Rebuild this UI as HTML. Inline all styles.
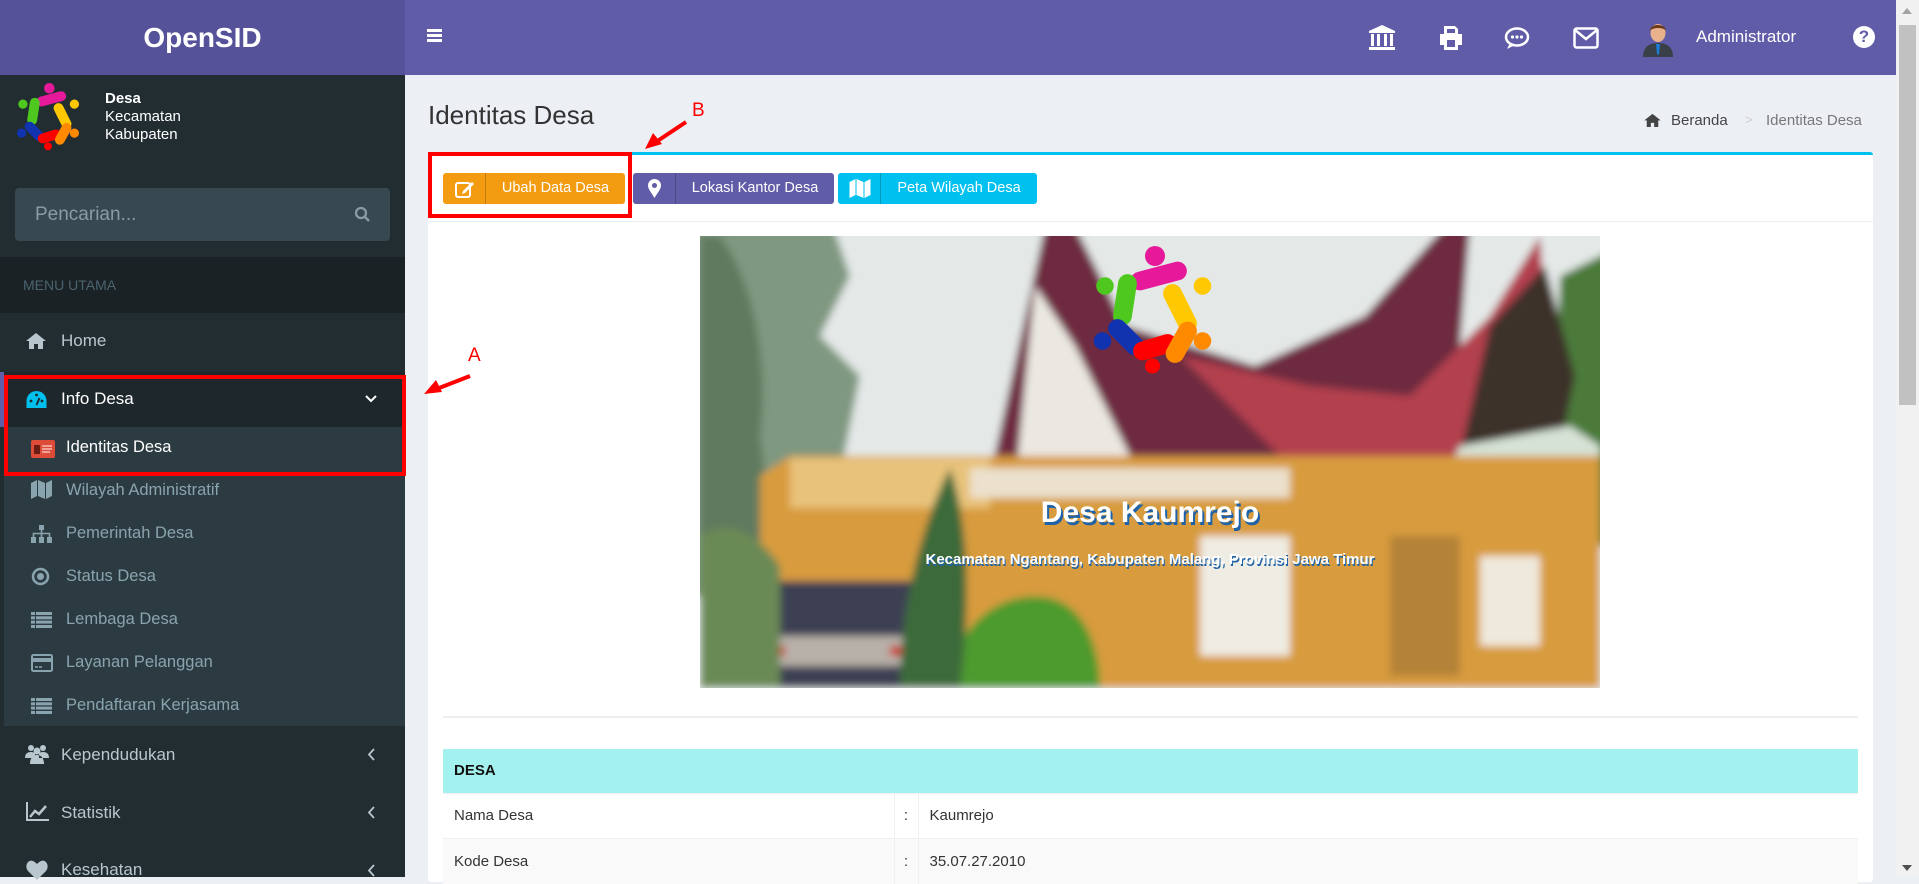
<!DOCTYPE html>
<html><head><meta charset="utf-8">
<style>
*{box-sizing:border-box;margin:0;padding:0}
body{width:1919px;height:877px;overflow:hidden;background:#ecf0f5;font-family:"Liberation Sans",sans-serif;position:relative}
.abs{position:absolute}
#logo{left:0;top:0;width:405px;height:75px;background:#555299;color:#fff;font-weight:bold;font-size:28px;text-align:center;line-height:75px}
#nav{left:405px;top:0;width:1491px;height:75px;background:#605ca8}
#side{left:0;top:75px;width:405px;height:802px;background:#222d32}
.w{color:#fff}
.sub{position:absolute;left:66px;font-size:16.5px;color:#8aa4af}
#scroll{left:1896px;top:0;width:23px;height:877px;background:#f1f1f1}
.btn{position:absolute;top:173px;height:31px;border-radius:3px;color:#fff;font-size:14.5px;line-height:31px}
.btn .ic{position:absolute;left:0;top:0;width:43px;height:31px;border-right:1px solid rgba(0,0,0,.2)}
.btn span{position:absolute;left:43px;right:0;text-align:center}
td{font-size:15px;color:#333}
</style></head><body>
<div id="logo" class="abs">OpenSID</div>
<div id="nav" class="abs">
 <div class="abs" style="left:22px;top:29px;width:15px;height:3px;background:#fff;box-shadow:0 5px #fff,0 10px #fff"></div>
 <svg class="abs" style="left:962px;top:24px" width="30" height="28" viewBox="0 0 30 28" fill="#fff"><path d="M15 1L2 7v2h26V7z"/><rect x="4" y="10" width="3" height="12"/><rect x="10" y="10" width="3" height="12"/><rect x="17" y="10" width="3" height="12"/><rect x="23" y="10" width="3" height="12"/><rect x="2" y="23" width="26" height="3"/></svg>
 <svg class="abs" style="left:1033px;top:25px" width="26" height="26" viewBox="0 0 26 26" fill="#fff"><path d="M6 1h11l3 3v5H6z M2 9h22v11h-4v5H6v-5H2z" /><rect x="9" y="15" width="8" height="7" fill="#605ca8"/><rect x="9" y="4" width="8" height="4" fill="#605ca8"/></svg>
 <svg class="abs" style="left:1099px;top:26px" width="26" height="25" viewBox="0 0 26 25"><ellipse cx="13" cy="11" rx="11" ry="8.5" fill="none" stroke="#fff" stroke-width="2.5"/><path d="M6 17l-3 6 8-4" fill="#fff"/><circle cx="8.5" cy="11" r="1.6" fill="#fff"/><circle cx="13" cy="11" r="1.6" fill="#fff"/><circle cx="17.5" cy="11" r="1.6" fill="#fff"/></svg>
 <svg class="abs" style="left:1168px;top:27px" width="26" height="22" viewBox="0 0 26 22"><rect x="1.5" y="1.5" width="23" height="19" rx="2" fill="none" stroke="#fff" stroke-width="2.5"/><path d="M2 3l11 9 11-9" fill="none" stroke="#fff" stroke-width="2.5"/></svg>
 <svg class="abs" style="left:1237px;top:19px" width="32" height="38" viewBox="0 0 32 38"><path d="M1 38c0-10 6-14 15-14s15 4 15 14z" fill="#3a4048"/><path d="M14 25h4l-1 10-1 1-1-1z" fill="#1a7fd6"/><ellipse cx="16" cy="14" rx="7.5" ry="9" fill="#e9b28d"/><path d="M8 12c0-8 16-8 16 0-2-4-14-4-16 0z" fill="#6b3a1e"/></svg>
 <div class="abs" style="left:1291px;top:27px;color:#fff;font-size:17px">Administrator</div>
 <div class="abs" style="left:1448px;top:26px;width:22px;height:22px;border-radius:50%;background:#fff;color:#605ca8;font-weight:bold;font-size:17px;text-align:center;line-height:22px">?</div>
</div>
<div id="scroll" class="abs"><div class="abs" style="left:3px;top:25px;width:17px;height:380px;background:#c1c1c1"></div><div class="abs" style="left:6px;top:8px;border:5px solid transparent;border-bottom:6px solid #a3a3a3;border-top:0"></div><div class="abs" style="left:6px;top:865px;border:5px solid transparent;border-top:6px solid #505050;border-bottom:0"></div></div>

<div id="side" class="abs">
 <svg class="abs" style="left:15px;top:6px" width="66" height="70" viewBox="0 0 100 100">
  <g stroke-linecap="round" stroke-width="15" fill="none">
  <path d="M40 28L70 20" stroke="#e6199b"/><path d="M30 30L26 56" stroke="#4ec81e"/><path d="M66 38L78 62" stroke="#ffc800"/><path d="M22 66L36 80" stroke="#1233b0"/><path d="M42 84L62 78" stroke="#f00"/><path d="M78 68L68 86" stroke="#ff8a00"/></g>
  <circle cx="52" cy="8" r="8" fill="#e6199b"/><circle cx="12" cy="32" r="7" fill="#4ec81e"/><circle cx="90" cy="32" r="7" fill="#ffc800"/><circle cx="10" cy="76" r="7" fill="#1233b0"/><circle cx="90" cy="76" r="7" fill="#ff8a00"/><circle cx="50" cy="96" r="6" fill="#f00"/>
 </svg>
 <div class="abs w" style="left:105px;top:15px;font-size:15px;font-weight:bold">Desa</div>
 <div class="abs w" style="left:105px;top:33px;font-size:15px">Kecamatan</div>
 <div class="abs w" style="left:105px;top:51px;font-size:15px">Kabupaten</div>
 <div class="abs" style="left:15px;top:113px;width:375px;height:53px;background:#374850;border-radius:4px"></div>
 <div class="abs" style="left:35px;top:129px;font-size:19px;color:#8b9ba3">Pencarian...</div>
 <svg class="abs" style="left:354px;top:131px" width="17" height="17" viewBox="0 0 17 17"><circle cx="7" cy="7" r="5" fill="none" stroke="#8b9ba3" stroke-width="2.3"/><path d="M11 11l4 4" stroke="#8b9ba3" stroke-width="2.5"/></svg>
 <div class="abs" style="left:0;top:182px;width:405px;height:56px;background:#1a2226"></div>
 <div class="abs" style="left:23px;top:202px;font-size:14px;color:#4b646f">MENU UTAMA</div>
 <svg class="abs" style="left:26px;top:257px" width="20" height="17" viewBox="0 0 20 17" fill="#b8c7ce"><path d="M10 1L0 9h3v8h5v-5h4v5h5V9h3z"/></svg>
 <div class="abs" style="left:61px;top:256px;font-size:17px;color:#b8c7ce">Home</div>
 <div class="abs" style="left:0;top:297px;width:405px;height:55px;background:#1e282c;border-left:4px solid #605ca8"></div>
 <svg class="abs" style="left:26px;top:315px" width="21" height="19" viewBox="0 0 21 19"><path d="M10.5 1A10 10 0 0 0 .5 11v7h20v-7A10 10 0 0 0 10.5 1z" fill="#00c0ef"/><circle cx="5" cy="11" r="1.4" fill="#1e282c"/><circle cx="10.5" cy="5" r="1.4" fill="#1e282c"/><circle cx="16" cy="11" r="1.4" fill="#1e282c"/><path d="M10.5 15l3-7" stroke="#1e282c" stroke-width="2"/></svg>
 <div class="abs" style="left:61px;top:314px;font-size:17px;color:#fff">Info Desa</div>
 <svg class="abs" style="left:365px;top:319px" width="12" height="9" viewBox="0 0 12 9"><path d="M1 2l5 5 5-5" fill="none" stroke="#fff" stroke-width="2"/></svg>
 <div class="abs" style="left:4px;top:352px;width:401px;height:299px;background:#2c3b41"></div>
 <svg class="abs" style="left:31px;top:365px" width="24" height="18" viewBox="0 0 24 18"><rect width="24" height="18" rx="2" fill="#dd4b39"/><rect x="3" y="5" width="6" height="9" fill="#6b1d14"/><path d="M11 6h10M11 9h10M11 12h8" stroke="#f6c0b8" stroke-width="1.5"/></svg>
 <div class="sub" style="top:363px;color:#fff">Identitas Desa</div>
 <svg class="abs" style="left:31px;top:405px" width="21" height="19" viewBox="0 0 21 19" fill="#8aa4af"><path d="M0 3l6-3v16l-6 3zM7 0l7 3v16l-7-3zM15 3l6-3v16l-6 3z"/></svg>
 <div class="sub" style="top:406px">Wilayah Administratif</div>
 <svg class="abs" style="left:31px;top:450px" width="21" height="18" viewBox="0 0 21 18" fill="#8aa4af"><rect x="8" y="0" width="5" height="5"/><rect x="0" y="12" width="5" height="6"/><rect x="8" y="12" width="5" height="6"/><rect x="16" y="12" width="5" height="6"/><path d="M10.5 5v7M2.5 12V8.5h16V12" stroke="#8aa4af" stroke-width="1.6" fill="none"/></svg>
 <div class="sub" style="top:449px">Pemerintah Desa</div>
 <svg class="abs" style="left:31px;top:492px" width="19" height="19" viewBox="0 0 19 19"><circle cx="9.5" cy="9.5" r="7.5" fill="none" stroke="#8aa4af" stroke-width="2.5"/><circle cx="9.5" cy="9.5" r="3.5" fill="#8aa4af"/></svg>
 <div class="sub" style="top:492px">Status Desa</div>
 <svg class="abs" style="left:31px;top:537px" width="21" height="16" viewBox="0 0 21 16" fill="#8aa4af"><rect y="0" width="4" height="3"/><rect x="5" y="0" width="16" height="3"/><rect y="4.3" width="4" height="3"/><rect x="5" y="4.3" width="16" height="3"/><rect y="8.6" width="4" height="3"/><rect x="5" y="8.6" width="16" height="3"/><rect y="13" width="4" height="3"/><rect x="5" y="13" width="16" height="3"/></svg>
 <div class="sub" style="top:535px">Lembaga Desa</div>
 <svg class="abs" style="left:31px;top:579px" width="22" height="18" viewBox="0 0 22 18"><rect x="1" y="1" width="20" height="16" rx="1.5" fill="none" stroke="#8aa4af" stroke-width="2"/><rect x="1" y="4" width="20" height="4" fill="#8aa4af"/><path d="M4 13h3M8 13h3" stroke="#8aa4af" stroke-width="1.5"/></svg>
 <div class="sub" style="top:578px">Layanan Pelanggan</div>
 <svg class="abs" style="left:31px;top:623px" width="21" height="16" viewBox="0 0 21 16" fill="#8aa4af"><rect y="0" width="4" height="3"/><rect x="5" y="0" width="16" height="3"/><rect y="4.3" width="4" height="3"/><rect x="5" y="4.3" width="16" height="3"/><rect y="8.6" width="4" height="3"/><rect x="5" y="8.6" width="16" height="3"/><rect y="13" width="4" height="3"/><rect x="5" y="13" width="16" height="3"/></svg>
 <div class="sub" style="top:621px">Pendaftaran Kerjasama</div>
 <svg class="abs" style="left:25px;top:669px" width="24" height="20" viewBox="0 0 24 20" fill="#b8c7ce"><circle cx="6" cy="4" r="3"/><circle cx="18" cy="4" r="3"/><circle cx="12" cy="7" r="3.5"/><path d="M0 14c0-4 2-6 6-6s4 2 4 2v4zM24 14c0-4-2-6-6-6s-4 2-4 2v4zM5 20c0-6 3-9 7-9s7 3 7 9z"/></svg>
 <div class="abs" style="left:61px;top:670px;font-size:17px;color:#b8c7ce">Kependudukan</div>
 <svg class="abs" style="left:367px;top:673px" width="8" height="13" viewBox="0 0 8 13"><path d="M7 1L2 6.5 7 12" fill="none" stroke="#b8c7ce" stroke-width="1.8"/></svg>
 <svg class="abs" style="left:26px;top:727px" width="23" height="19" viewBox="0 0 23 19"><path d="M1 0v18h22" fill="none" stroke="#b8c7ce" stroke-width="2"/><path d="M4 15l5-6 4 3 7-8" fill="none" stroke="#b8c7ce" stroke-width="2.5"/></svg>
 <div class="abs" style="left:61px;top:728px;font-size:17px;color:#b8c7ce">Statistik</div>
 <svg class="abs" style="left:367px;top:731px" width="8" height="13" viewBox="0 0 8 13"><path d="M7 1L2 6.5 7 12" fill="none" stroke="#b8c7ce" stroke-width="1.8"/></svg>
 <svg class="abs" style="left:26px;top:785px" width="22" height="20" viewBox="0 0 22 20" fill="#b8c7ce"><path d="M11 20L2 11C-2 6 2-1 7 1c2 1 3 2 4 3 1-1 2-2 4-3 5-2 9 5 5 10z"/></svg>
 <div class="abs" style="left:61px;top:785px;font-size:17px;color:#b8c7ce">Kesehatan</div>
 <svg class="abs" style="left:367px;top:789px" width="8" height="13" viewBox="0 0 8 13"><path d="M7 1L2 6.5 7 12" fill="none" stroke="#b8c7ce" stroke-width="1.8"/></svg>
</div>

<div class="abs" style="left:428px;top:100px;font-size:26px;color:#333">Identitas Desa</div>
<svg class="abs" style="left:1644px;top:113px" width="17" height="14" viewBox="0 0 20 17" fill="#444"><path d="M10 1L0 9h3v8h5v-5h4v5h5V9h3z"/></svg>
<div class="abs" style="left:1671px;top:112px;font-size:15px;color:#444">Beranda</div>
<div class="abs" style="left:1745px;top:112px;font-size:13px;color:#ccc">&gt;</div>
<div class="abs" style="left:1766px;top:112px;font-size:15px;color:#777">Identitas Desa</div>

<div class="abs" style="left:428px;top:152px;width:1445px;height:730px;background:#fff;border-top:3px solid #00c0ef;border-radius:3px"></div>
<div class="btn" style="left:443px;width:182px;background:#f39c12"><div class="ic"><svg style="position:absolute;left:12px;top:6px" width="20" height="19" viewBox="0 0 20 19"><rect x="1" y="4" width="14" height="14" rx="2" fill="none" stroke="#fff" stroke-width="2"/><path d="M8 12l9-9 2 2-9 9-3 1z" fill="#fff"/></svg></div><span>Ubah Data Desa</span></div>
<div class="btn" style="left:633px;width:201px;background:#605ca8"><div class="ic"><svg style="position:absolute;left:15px;top:6px" width="13" height="19" viewBox="0 0 13 19"><path d="M6.5 19C3 13 0 10 0 6.5a6.5 6.5 0 0 1 13 0C13 10 10 13 6.5 19z" fill="#fff"/><circle cx="6.5" cy="6.5" r="2.5" fill="#605ca8"/></svg></div><span>Lokasi Kantor Desa</span></div>
<div class="btn" style="left:838px;width:199px;background:#00c0ef"><div class="ic"><svg style="position:absolute;left:11px;top:6px" width="22" height="19" viewBox="0 0 21 19" fill="#fff"><path d="M0 3l6-3v16l-6 3zM7 0l7 3v16l-7-3zM15 3l6-3v16l-6 3z"/></svg></div><span>Peta Wilayah Desa</span></div>
<div class="abs" style="left:428px;top:221px;width:1445px;height:1px;background:#f0f0f0"></div>

<svg class="abs" style="left:700px;top:236px" width="900" height="452" viewBox="0 0 900 452">
 <defs><filter id="bl" x="-5%" y="-5%" width="110%" height="110%"><feGaussianBlur stdDeviation="4"/></filter><clipPath id="cp"><rect width="900" height="452"/></clipPath></defs>
 <g clip-path="url(#cp)"><g filter="url(#bl)">
 <rect x="-20" y="-20" width="940" height="492" fill="#e4e9e8"/>
 <path d="M-20 -20h150l20 60-30 60 40 40-20 100 40 120H-20z" fill="#7f9880"/>
 <path d="M20 0c30 40 50 120 40 200l30 252H0V0z" fill="#5e7a5e"/>
 <path d="M860 40l60-30v300h-70z" fill="#4c7a3a"/>
 <path d="M345 -10l30 0 50 100 130 40 110-50 80-90 25 0-10 120-90 110-150 30-170-10-60 0z" fill="#6e2b3f"/>
 <path d="M480 120l130 30 100 10 80-80 50-80 10 140-100 90-150 10z" fill="#b2414d"/>
 <path d="M335 50l40 60 60 120-120 20z" fill="#ebe8e2"/>
 <path d="M790 90l55-60 30 110-20 100-100 0z" fill="#3d3329"/>
 <path d="M760 210l110-20 30 20v40H740z" fill="#d6e2d5"/>
 <path d="M590 250l170-10v30l-30 40-30-30-30 30-30-30-30 30z" fill="#9c2938"/>
 <path d="M60 240l30-20h810v232H60z" fill="#d89b3e"/>
 <rect x="90" y="222" width="200" height="50" fill="#e8c27a"/>
 <rect x="270" y="232" width="320" height="30" fill="#ebe1cc"/>
 <rect x="500" y="300" width="90" height="120" fill="#efece3"/>
 <rect x="780" y="320" width="60" height="90" fill="#efe9dc"/>
 <rect x="690" y="300" width="70" height="140" fill="#b48238"/>
 <path d="M40 345h200v107H40z" fill="#3c4152"/><rect x="50" y="400" width="180" height="30" fill="#b7b0a8"/><rect x="55" y="410" width="30" height="10" fill="#c33"/><rect x="190" y="410" width="30" height="10" fill="#c33"/>
 <path d="M250 452c0-60 50-100 100-90 40 10 50 60 50 90z" fill="#4e9a2e"/>
 <path d="M200 452c0-80 20-160 50-220 20 60 20 140 10 220z" fill="#3e6a3a"/>
 <path d="M0 300c30-20 60 0 80 30v122H0z" fill="#6b8a55"/>
 </g></g>
 <g transform="translate(390,10) scale(1.25)">
  <g stroke-linecap="round" stroke-width="15" fill="none">
  <path d="M40 28L70 20" stroke="#e6199b"/><path d="M30 30L26 56" stroke="#4ec81e"/><path d="M66 38L78 62" stroke="#ffc800"/><path d="M22 66L36 80" stroke="#1233b0"/><path d="M42 84L62 78" stroke="#f00"/><path d="M78 68L68 86" stroke="#ff8a00"/></g>
  <circle cx="52" cy="8" r="8" fill="#e6199b"/><circle cx="12" cy="32" r="7" fill="#4ec81e"/><circle cx="90" cy="32" r="7" fill="#ffc800"/><circle cx="10" cy="76" r="7" fill="#1233b0"/><circle cx="90" cy="76" r="7" fill="#ff8a00"/><circle cx="50" cy="96" r="6" fill="#f00"/>
 </g>
 <text x="450" y="286" text-anchor="middle" font-family="Liberation Sans" font-weight="bold" font-size="30" fill="#1e63a8" transform="translate(2,3)">Desa Kaumrejo</text>
 <text x="450" y="286" text-anchor="middle" font-family="Liberation Sans" font-weight="bold" font-size="30" fill="#fff">Desa Kaumrejo</text>
 <text x="450" y="328" text-anchor="middle" font-family="Liberation Sans" font-weight="bold" font-size="15" fill="#1e63a8" transform="translate(1,2)">Kecamatan Ngantang, Kabupaten Malang, Provinsi Jawa Timur</text>
 <text x="450" y="328" text-anchor="middle" font-family="Liberation Sans" font-weight="bold" font-size="15" fill="#fff">Kecamatan Ngantang, Kabupaten Malang, Provinsi Jawa Timur</text>
</svg>

<div class="abs" style="left:443px;top:716px;width:1415px;height:2px;background:#eee"></div>
<table class="abs" style="left:443px;top:749px;width:1415px;border-collapse:collapse">
 <tr style="height:44px;background:#a3f2ef"><td colspan="3" style="padding-left:11px;font-weight:bold;color:#111">DESA</td></tr>
 <tr style="height:45px;border-top:1px solid #f0f0f0"><td style="width:451px;padding-left:11px">Nama Desa</td><td style="width:24px;border-left:1px solid #f0f0f0;border-right:1px solid #f0f0f0;text-align:center">:</td><td style="padding-left:11px">Kaumrejo</td></tr>
 <tr style="height:46px;background:#f9f9f9;border-top:1px solid #f0f0f0"><td style="padding-left:11px">Kode Desa</td><td style="border-left:1px solid #f0f0f0;border-right:1px solid #f0f0f0;text-align:center">:</td><td style="padding-left:11px">35.07.27.2010</td></tr>
</table>

<div class="abs" style="left:4px;top:375px;width:402px;height:101px;border:4px solid #f00"></div>
<div class="abs" style="left:428px;top:152px;width:204px;height:66px;border:4px solid #f00"></div>
<div class="abs" style="left:468px;top:345px;color:#f00;font-size:19px">A</div>
<div class="abs" style="left:692px;top:100px;color:#f00;font-size:19px">B</div>
<svg class="abs" style="left:420px;top:370px" width="60" height="30" viewBox="0 0 60 30"><path d="M50 6L14 20" stroke="#f00" stroke-width="4"/><path d="M4 24l12-14 6 12z" fill="#f00"/></svg>
<svg class="abs" style="left:640px;top:118px" width="52" height="36" viewBox="0 0 52 36"><path d="M46 4L16 24" stroke="#f00" stroke-width="4"/><path d="M5 31l8-16 9 11z" fill="#f00"/></svg>
</body></html>
